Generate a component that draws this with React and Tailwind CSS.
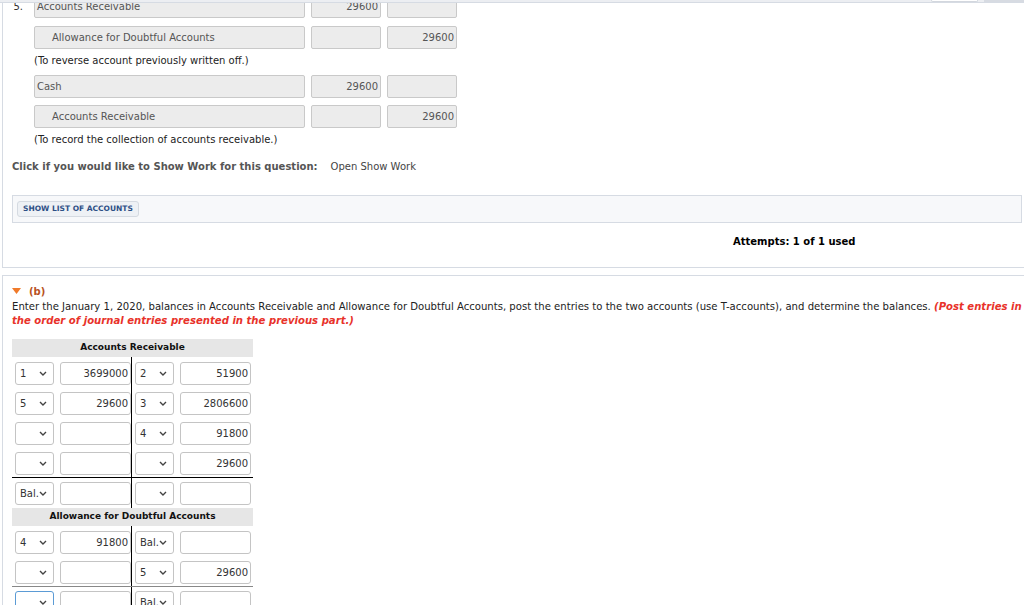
import React from "react";

const font = { fontFamily: '"DejaVu Sans", Verdana, sans-serif' };

const Chevron = () => (
  <svg width="8" height="5" viewBox="0 0 8 5" className="shrink-0">
    <polyline points="1,1 4,4 7,1" fill="none" stroke="#444" strokeWidth="1.4" />
  </svg>
);

const Box = ({ w, children, indent, right }) => (
  <div
    className={`h-[23px] ${w} shrink-0 rounded-[2px] border border-[#c9c9c9] bg-[#ececec] text-[#555] text-[10px] flex items-center ${
      right ? "justify-end pr-[2px]" : indent ? "pl-[17px]" : "pl-[2px]"
    }`}
  >
    {children}
  </div>
);

const JournalRow = ({ num, account, indent, debit, credit }) => (
  <div className="flex items-center h-[23px]">
    <div className="w-[31px] shrink-0 flex justify-end pr-[11px] text-[10px] text-[#333]">{num}</div>
    <Box w="w-[271px]" indent={indent}>
      {account}
    </Box>
    <div className="ml-[6px]">
      <Box w="w-[70px]" right>
        {debit}
      </Box>
    </div>
    <div className="ml-[6px]">
      <Box w="w-[70px]" right>
        {credit}
      </Box>
    </div>
  </div>
);

const Select = ({ value, focus }) => (
  <div
    className={`h-[23px] w-[39px] shrink-0 rounded-[3px] border bg-white flex items-center justify-between pl-[4px] pr-[6px] text-[10px] text-[#333] ${
      focus ? "border-[#5b9bd5]" : "border-[#c4c4c4]"
    }`}
  >
    <span>{value}</span>
    <Chevron />
  </div>
);

const Amount = ({ value }) => (
  <div className="h-[23px] w-[71px] shrink-0 rounded-[3px] border border-[#c4c4c4] bg-white flex items-center justify-end pr-[2px] text-[10px] text-[#333]">
    {value}
  </div>
);

const Cell = ({ sel, amt, focus }) => (
  <div className="flex items-center gap-[6px] h-[23px]">
    <Select value={sel} focus={focus} />
    <Amount value={amt} />
  </div>
);

const TAccount = ({ title, rows, bal, lineColor }) => (
  <div className="w-[241px]">
    <div className="h-[18px] bg-[#e6e6e6] flex items-center justify-center text-[9px] font-bold text-[#111]">
      {title}
    </div>
    <div className="grid grid-cols-[120px_121px]">
      <div className="border-r border-black flex flex-col gap-[7px] pt-[5px] pb-[2px] pl-[3px]">
        {rows.map((r, i) => (
          <Cell key={i} sel={r[0]} amt={r[1]} />
        ))}
      </div>
      <div className="flex flex-col gap-[7px] pt-[5px] pb-[2px] pl-[3px]">
        {rows.map((r, i) => (
          <Cell key={i} sel={r[2]} amt={r[3]} />
        ))}
      </div>
    </div>
    <div className={`h-[1px] ${lineColor}`} />
    <div className="grid grid-cols-[120px_121px]">
      <div className="border-r border-black pt-[4px] pb-[3px] pl-[3px]">
        <Cell sel={bal[0]} amt={bal[1]} focus={bal[4]} />
      </div>
      <div className="pt-[4px] pb-[3px] pl-[3px]">
        <Cell sel={bal[2]} amt={bal[3]} />
      </div>
    </div>
  </div>
);

export default function App() {
  return (
    <div className="w-[1024px] h-[605px] overflow-hidden bg-white text-[#222]" style={font}>
      {/* top strip */}
      <div className="h-[3px] bg-[#eceef2] border-b border-[#d6dbe3] flex justify-end items-start">
        <div className="w-[47px] h-[2px] bg-white border-x border-b border-[#d3d7de] rounded-b-[2px] mr-[6px]" />
        <div className="w-[40px] h-[2px] bg-[#d7dbe2]" />
      </div>

      {/* part (a) panel */}
      <div className="ml-[2px] h-[265px] border-l border-b border-[#d6dbe3] overflow-hidden">
        <div className="mt-[-8px] flex flex-col">
          <JournalRow num="5." account="Accounts Receivable" debit="29600" credit="" />
          <div className="mt-[8px]">
            <JournalRow account="Allowance for Doubtful Accounts" indent debit="" credit="29600" />
          </div>
          <div className="pl-[31px] h-[14px] mt-[4px] flex items-center text-[10px] text-[#222]">
            (To reverse account previously written off.)
          </div>
          <div className="mt-[8px]">
            <JournalRow account="Cash" debit="29600" credit="" />
          </div>
          <div className="mt-[7px]">
            <JournalRow account="Accounts Receivable" indent debit="" credit="29600" />
          </div>
          <div className="pl-[31px] h-[14px] mt-[4px] flex items-center text-[10px] text-[#222]">
            (To record the collection of accounts receivable.)
          </div>
          <div className="pl-[9px] h-[14px] mt-[13px] flex items-center text-[10px]">
            <span className="font-bold text-[#555]">Click if you would like to Show Work for this question:</span>
            <span className="ml-[13px] text-[#444]">Open Show Work</span>
          </div>
          <div className="ml-[9px] mt-[22px] w-[1010px] h-[28px] bg-[#f7f8fa] border border-[#d6dbe3] flex items-center pl-[4px]">
            <button className="h-[16px] px-[5px] rounded-[3px] border border-[#d5dae1] bg-[#eef1f5] text-[7.5px] font-bold text-[#2d4f85] leading-none">
              SHOW LIST OF ACCOUNTS
            </button>
          </div>
          <div className="pl-[730px] h-[14px] mt-[11px] flex items-center text-[10px] font-bold text-black">
            Attempts: 1 of 1 used
          </div>
        </div>
      </div>

      {/* part (b) panel */}
      <div className="ml-[2px] mt-[7px] border-l border-t border-[#d6dbe3] pl-[9px] pt-[8px]">
        <div className="h-[14px] flex items-center gap-[8px]">
          <svg width="9" height="6" viewBox="0 0 9 6">
            <polygon points="0,0 9,0 4.5,6" fill="#f07a2a" />
          </svg>
          <span className="text-[10px] font-bold text-[#b8521e]">(b)</span>
        </div>
        <div className="mt-[2px] text-[10.1px] leading-[14px] whitespace-nowrap text-[#222]">
          Enter the January 1, 2020, balances in Accounts Receivable and Allowance for Doubtful Accounts, post the
          entries to the two accounts (use T-accounts), and determine the balances.{" "}
          <span className="font-bold italic text-[#e8322a]">(Post entries in</span>
          <br />
          <span className="font-bold italic text-[#e8322a]">the order of journal entries presented in the previous part.)</span>
        </div>

        <div className="mt-[11px]">
          <TAccount
            title="Accounts Receivable"
            rows={[
              ["1", "3699000", "2", "51900"],
              ["5", "29600", "3", "2806600"],
              ["", "", "4", "91800"],
              ["", "", "", "29600"],
            ]}
            bal={["Bal.", "", "", ""]}
            lineColor="bg-black"
          />
          <TAccount
            title="Allowance for Doubtful Accounts"
            rows={[
              ["4", "91800", "Bal.", ""],
              ["", "", "5", "29600"],
            ]}
            bal={["", "", "Bal.", "", true]}
            lineColor="bg-[#888]"
          />
        </div>
      </div>
    </div>
  );
}
